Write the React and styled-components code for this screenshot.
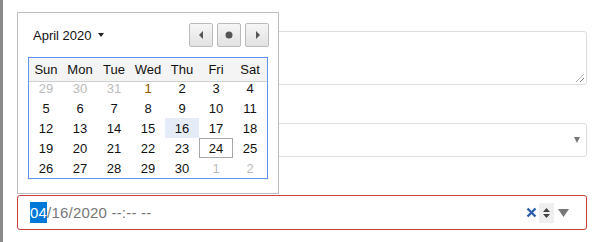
import React from "react";
import styled, { createGlobalStyle } from "styled-components";

const GlobalStyle = createGlobalStyle`
  html, body {
    margin: 0;
    padding: 0;
    background: #fff;
    font-family: "Liberation Sans", Arial, sans-serif;
  }
`;

const weeks = [
  [29, 30, 31, 1, 2, 3, 4],
  [5, 6, 7, 8, 9, 10, 11],
  [12, 13, 14, 15, 16, 17, 18],
  [19, 20, 21, 22, 23, 24, 25],
  [26, 27, 28, 29, 30, 1, 2],
];
const dayNames = ["Sun", "Mon", "Tue", "Wed", "Thu", "Fri", "Sat"];

const App = () => {
  return (
    <Page>
      <GlobalStyle />
      <Edge />
      <Form>
        <TextArea />
        <Select>
          <SelectArrow />
        </Select>
        <DateField>
          <DateText>
            <Selected>04</Selected>/16/2020 --:-- --
          </DateText>
          <Controls>
            <ClearBtn>
              <svg width="11" height="11" viewBox="0 0 11 11">
                <path d="M1.5 1.5 L9.5 9.5 M9.5 1.5 L1.5 9.5" stroke="#2f5fa8" strokeWidth="2.4" />
              </svg>
            </ClearBtn>
            <Spinner>
              <svg width="9" height="14" viewBox="0 0 9 14">
                <path d="M4.5 2 L8 6 L1 6 Z" fill="#444" />
                <path d="M4.5 12 L8 8 L1 8 Z" fill="#444" />
              </svg>
            </Spinner>
            <DropArrow>
              <svg width="11" height="8" viewBox="0 0 11 8">
                <path d="M0 0 L11 0 L5.5 8 Z" fill="#777" />
              </svg>
            </DropArrow>
          </Controls>
        </DateField>

        <Popup>
          <PopupHead>
            <MonthLabel>
              April 2020
              <Caret />
            </MonthLabel>
            <NavGroup>
              <NavBtn>
                <svg width="5" height="8" viewBox="0 0 5 8">
                  <path d="M4 0 L0 4 L4 8 Z" fill="#555" />
                </svg>
              </NavBtn>
              <NavBtn>
                <svg width="8" height="8" viewBox="0 0 8 8">
                  <circle cx="4" cy="4" r="3.5" fill="#555" />
                </svg>
              </NavBtn>
              <NavBtn>
                <svg width="5" height="8" viewBox="0 0 5 8">
                  <path d="M1 0 L5 4 L1 8 Z" fill="#555" />
                </svg>
              </NavBtn>
            </NavGroup>
          </PopupHead>
          <Grid>
            <HeadRow>
              {dayNames.map((d) => (
                <HeadCell key={d}>{d}</HeadCell>
              ))}
            </HeadRow>
            {weeks.map((week, wi) =>
              week.map((n, di) => {
                const other = (wi === 0 && n > 20) || (wi === 4 && n < 10);
                return (
                  <Day
                    key={wi + "-" + di}
                    $other={other}
                    $first={wi === 0 && n === 1}
                    $today={wi === 2 && n === 16}
                    $picked={wi === 3 && n === 24}
                  >
                    {n}
                  </Day>
                );
              })
            )}
          </Grid>
        </Popup>
      </Form>
    </Page>
  );
};

const Page = styled.div`
  position: relative;
  width: 598px;
  height: 242px;
  display: flex;
  overflow: hidden;
`;

const Edge = styled.div`
  width: 3px;
  background: #8a8a8a;
  flex-shrink: 0;
`;

const Form = styled.div`
  position: relative;
  width: 570px;
  margin-left: 14px;
  padding-top: 31px;
  display: flex;
  flex-direction: column;
  gap: 38px;
`;

const TextArea = styled.div`
  position: relative;
  height: 54px;
  box-sizing: border-box;
  border: 1px solid #ddd;
  border-radius: 3px;
  &::after {
    content: "";
    position: absolute;
    right: 2px;
    bottom: 2px;
    width: 8px;
    height: 8px;
    background: repeating-linear-gradient(
      135deg,
      transparent 0 2px,
      #777 2px 3px
    );
    clip-path: polygon(100% 0, 100% 100%, 0 100%);
  }
`;

const Select = styled.div`
  height: 34px;
  box-sizing: border-box;
  border: 1px solid #ddd;
  border-radius: 3px;
  display: flex;
  align-items: center;
  justify-content: flex-end;
  padding-right: 6px;
`;

const SelectArrow = styled.div`
  width: 0;
  height: 0;
  border-left: 3px solid transparent;
  border-right: 3px solid transparent;
  border-top: 6px solid #777;
`;

const DateField = styled.div`
  height: 35px;
  box-sizing: border-box;
  border: 1px solid #c9403c;
  border-radius: 3px;
  display: flex;
  align-items: center;
  justify-content: space-between;
  padding: 0 17px 0 12px;
`;

const DateText = styled.div`
  font-size: 15px;
  color: #777;
  letter-spacing: 0.2px;
`;

const Selected = styled.span`
  background: #0078d7;
  color: #fff;
  padding: 2px 0;
`;

const Controls = styled.div`
  display: flex;
  align-items: center;
`;

const ClearBtn = styled.span`
  display: flex;
  margin-right: 2px;
`;

const Spinner = styled.span`
  width: 15px;
  height: 20px;
  background: #efefef;
  display: flex;
  align-items: center;
  justify-content: center;
  margin-right: 4px;
`;

const DropArrow = styled.span`
  display: flex;
`;

const Popup = styled.div`
  position: absolute;
  left: 0;
  top: 12px;
  width: 262px;
  height: 182px;
  box-sizing: border-box;
  background: #fff;
  border: 1px solid #bdbdbd;
  padding: 10px 9px 0 10px;
`;

const PopupHead = styled.div`
  display: flex;
  align-items: center;
  justify-content: space-between;
  height: 24px;
  margin-bottom: 10px;
`;

const MonthLabel = styled.div`
  display: flex;
  align-items: center;
  font-size: 13px;
  color: #111;
  padding-left: 5px;
`;

const Caret = styled.span`
  margin-left: 6px;
  width: 0;
  height: 0;
  border-left: 3.5px solid transparent;
  border-right: 3.5px solid transparent;
  border-top: 4px solid #222;
`;

const NavGroup = styled.div`
  display: flex;
  gap: 4px;
`;

const NavBtn = styled.div`
  width: 24px;
  height: 24px;
  box-sizing: border-box;
  border: 1px solid #bbb;
  border-radius: 2px;
  background: linear-gradient(#f6f6f6, #e2e2e2);
  display: flex;
  align-items: center;
  justify-content: center;
`;

const Grid = styled.div`
  width: 240px;
  box-sizing: border-box;
  border: 1px solid #5b96ee;
  display: grid;
  grid-template-columns: repeat(7, 34px);
  grid-auto-rows: 20px;
`;

const HeadRow = styled.div`
  grid-column: 1 / -1;
  display: grid;
  grid-template-columns: repeat(7, 34px);
  height: 24px;
  box-sizing: border-box;
  background: #f4f4f4;
  border-bottom: 1px solid #cfcfcf;
`;

const HeadCell = styled.div`
  display: flex;
  align-items: center;
  justify-content: center;
  font-size: 13px;
  color: #111;
`;

const Day = styled.div`
  display: flex;
  align-items: center;
  justify-content: center;
  font-size: 13px;
  box-sizing: border-box;
  color: ${(p) => (p.$other ? "#bbb" : p.$first ? "#8a5a00" : "#111")};
  background: ${(p) => (p.$today ? "#e5ecf8" : "transparent")};
  border: 1px solid ${(p) => (p.$picked ? "#aaa" : "transparent")};
`;

export default App;
